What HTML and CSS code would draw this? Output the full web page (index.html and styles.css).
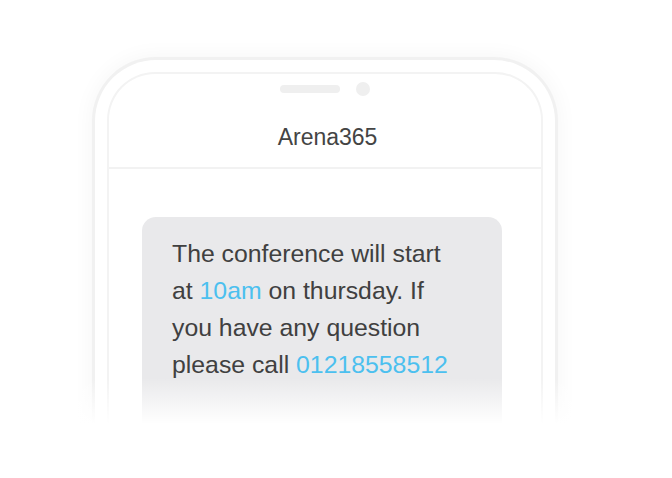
FILE: index.html
```html
<!DOCTYPE html>
<html>
<head>
<meta charset="utf-8">
<link rel="stylesheet" href="styles.css">
</head>
<body>
<div class="stage">
  <div class="phone">
    <div class="screen">
      <div class="header">
        <div class="notch">
          <span class="speaker"></span>
          <span class="camera"></span>
        </div>
        <div class="title">Arena365</div>
      </div>
      <div class="chat">
        <div class="bubble">
          <p class="msg"><span>The conference will start</span> <span>at</span> <span class="link">10am</span> <span>on thursday. If you have any question please call</span> <span class="link">01218558512</span></p>
        </div>
      </div>
    </div>
  </div>
  <div class="fade"></div>
</div>
</body>
</html>
```

FILE: styles.css
```css
html, body {
  margin: 0;
  padding: 0;
  background: #ffffff;
}
body {
  width: 672px;
  height: 478px;
  overflow: hidden;
  font-family: "Liberation Sans", Arial, Helvetica, sans-serif;
}
.stage {
  position: relative;
  width: 672px;
  height: 478px;
  padding-top: 57px;
  padding-left: 92px;
  box-sizing: border-box;
  display: flex;
}
.phone {
  width: 466px;
  height: 440px;
  box-sizing: border-box;
  border: 3px solid #f1f1f1;
  border-bottom: none;
  border-radius: 64px 64px 0 0;
  padding: 12px 12px 0 12px;
  box-shadow: 0 0 22px rgba(0, 0, 0, 0.045);
  background: #fff;
}
.screen {
  height: 100%;
  box-sizing: border-box;
  border: 2px solid #f3f3f3;
  border-bottom: none;
  border-radius: 48px 48px 0 0;
}
.header {
  border-bottom: 2px solid #f2f2f2;
  padding-top: 7px;
  padding-bottom: 19px;
}
.notch {
  display: flex;
  justify-content: center;
  align-items: center;
  gap: 16px;
  height: 15px;
}
.speaker {
  width: 60px;
  height: 8px;
  border-radius: 4px;
  background: #efefef;
}
.camera {
  width: 14px;
  height: 14px;
  border-radius: 50%;
  background: #efefef;
}
.title {
  margin-top: 30px;
  padding-left: 5px;
  text-align: center;
  font-size: 23px;
  line-height: 22px;
  color: #444444;
}
.chat {
  padding-top: 48px;
  padding-left: 33px;
}
.bubble {
  width: 360px;
  height: 260px;
  box-sizing: border-box;
  background: #e9e9eb;
  border-radius: 14px;
  padding: 18px 0 0 30px;
}
.msg {
  margin: 0;
  width: 285px;
  font-size: 24.8px;
  line-height: 37px;
  color: #404040;
}
.link {
  color: #4cc0ef;
}
.fade {
  position: absolute;
  left: 0;
  right: 0;
  top: 378px;
  bottom: 0;
  background: linear-gradient(to bottom, rgba(255,255,255,0) 0px, #ffffff 46px, #ffffff 100%);
}
```
